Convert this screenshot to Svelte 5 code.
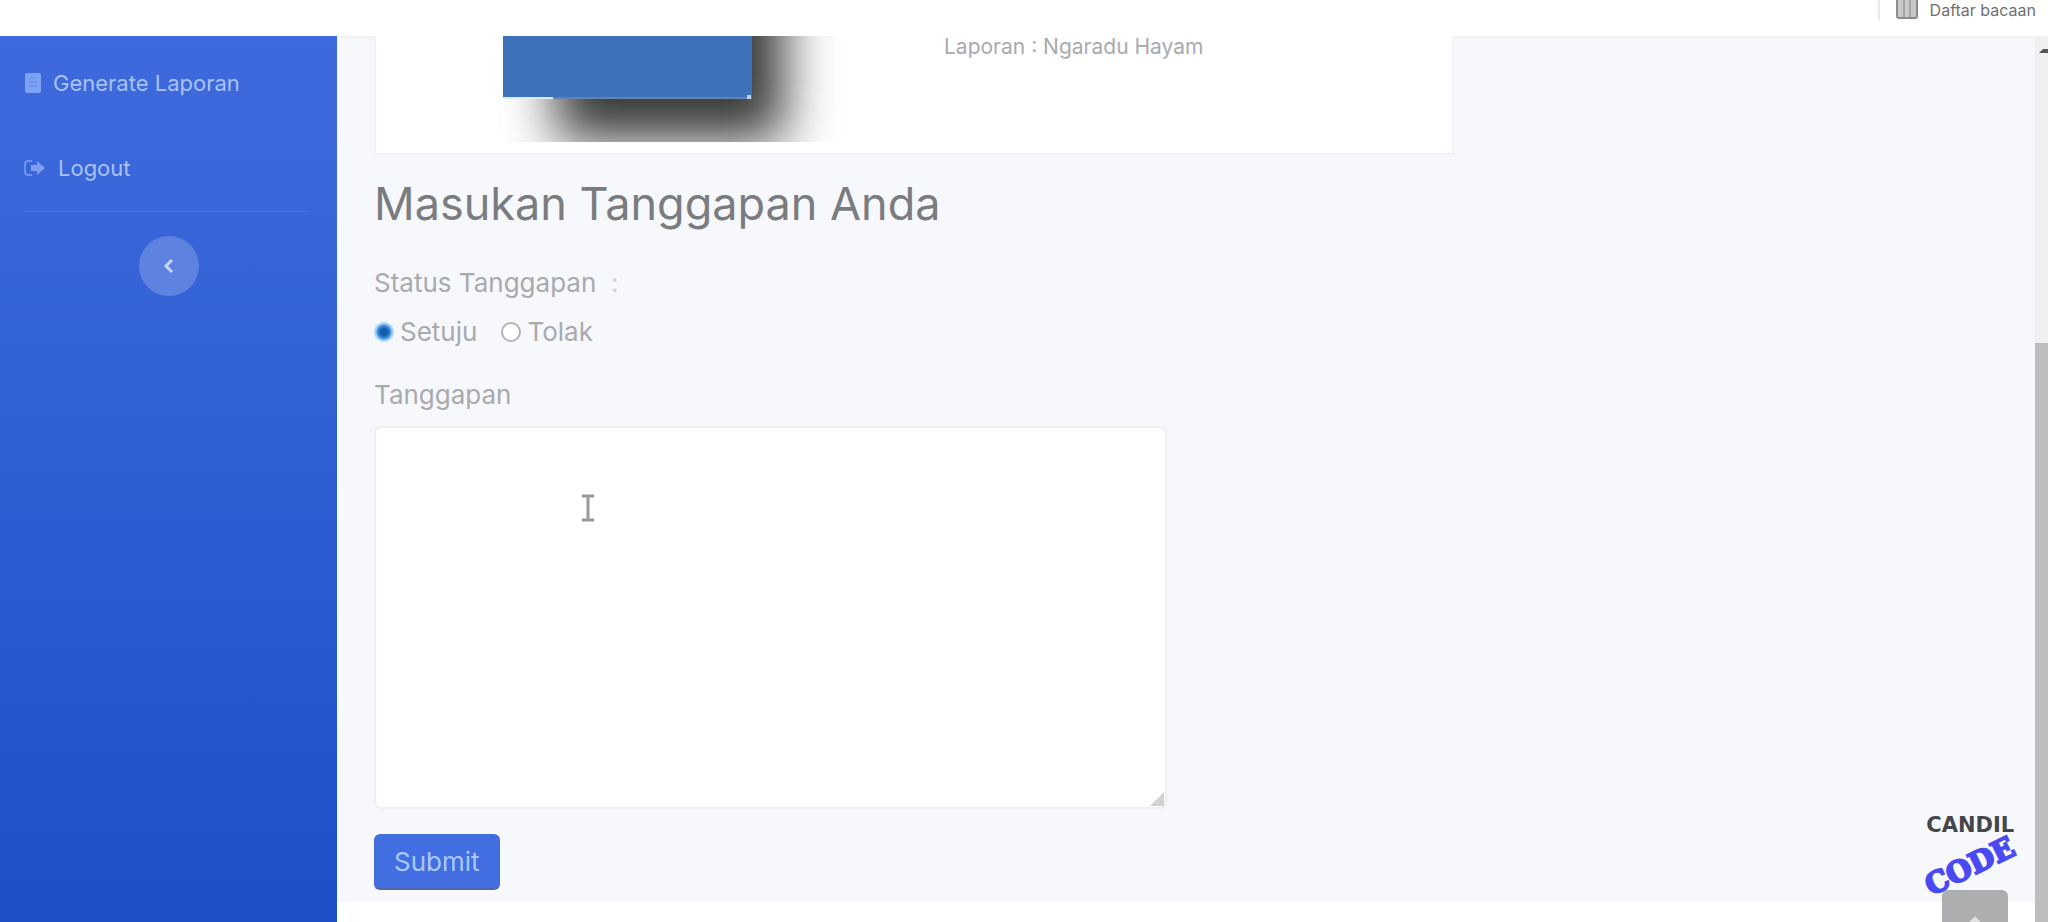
<script>
  let status = "setuju";
  let tanggapan = "";

  const handleSubmit = () => {
    tanggapan = tanggapan.trim();
  };
</script>

<div class="page">
  <header class="bookmarks">
    <a class="reading-list" href="#bacaan">
      <svg width="22" height="20" viewBox="0 0 22 20" aria-hidden="true">
        <rect x="1" y="-2" width="20" height="20" rx="2" fill="#c9c9c9" stroke="#8c8c8c" stroke-width="2" />
        <path d="M8 0v17M14 0v17" stroke="#a4a4a4" stroke-width="2" />
      </svg>
      Daftar bacaan
    </a>
  </header>

  <div class="shell">
    <nav class="sidebar">
      <a class="nav-link" href="#laporan">
        <svg width="18" height="22" viewBox="0 0 18 22" aria-hidden="true">
          <rect x="1" y="1" width="16" height="20" rx="2" fill="#7ea3f5" />
          <path d="M5 6h8M5 10h8M5 14h8" stroke="#5f88ea" stroke-width="1" />
        </svg>
        Generate Laporan
      </a>
      <a class="nav-link logout" href="#logout">
        <svg width="22" height="18" viewBox="0 0 22 18" aria-hidden="true">
          <path d="M8 2H4a3 3 0 0 0-3 3v8a3 3 0 0 0 3 3h4" fill="none" stroke="#6f90ec" stroke-width="2" />
          <path d="M7 6h6V2l8 7-8 7v-4H7z" fill="#7f9df2" />
        </svg>
        Logout
      </a>
      <hr />
      <button class="toggle" type="button" aria-label="Toggle sidebar">
        <svg width="12" height="18" viewBox="0 0 12 18" aria-hidden="true">
          <path d="M9 3L3 9l6 6" fill="none" stroke="#c8d4f9" stroke-width="3" />
        </svg>
      </button>
    </nav>

    <div class="content">
      <main>
        <section class="card">
          <svg class="photo" width="344" height="106" viewBox="0 0 344 106" aria-hidden="true">
            <defs>
              <filter id="soft" x="-50%" y="-100%" width="200%" height="300%" color-interpolation-filters="sRGB">
                <feGaussianBlur stdDeviation="26" />
              </filter>
            </defs>
            <rect x="58" y="-200" width="228" height="304" fill="#363835" filter="url(#soft)" />
            <rect width="5" height="62" fill="#fff" />
            <rect x="5" y="-4" width="249" height="66" fill="#3d72b9" />
            <path d="M5 62h249" stroke="#6682b0" stroke-width="2" />
            <path d="M5 62h50" stroke="#dfe8f5" stroke-width="2" />
            <rect x="249" y="59" width="4" height="4" fill="#b9d3f0" />
          </svg>
          <p>Laporan : Ngaradu Hayam</p>
        </section>

        <h1>Masukan Tanggapan Anda</h1>

        <form on:submit|preventDefault={handleSubmit}>
          <fieldset>
            <legend>Status Tanggapan &nbsp;<span class="colon">:</span></legend>
            <div class="options">
              <label>
                <input type="radio" name="status" value="setuju" bind:group={status} />
                Setuju
              </label>
              <label>
                <input type="radio" name="status" value="tolak" bind:group={status} />
                Tolak
              </label>
            </div>
          </fieldset>

          <label class="field-label" for="tanggapan">Tanggapan</label>
          <div class="field">
            <textarea id="tanggapan" bind:value={tanggapan}></textarea>
            <svg class="grip" width="14" height="14" viewBox="0 0 14 14" aria-hidden="true">
              <path d="M14 0v14H0z" fill="#d2d2d2" />
            </svg>
            <svg class="cursor" width="14" height="28" viewBox="0 0 14 28" aria-hidden="true">
              <path d="M1 2h12M1 26h12M7 2v24" fill="none" stroke="#9a9a9a" stroke-width="3" />
            </svg>
          </div>

          <button class="submit" type="submit">Submit</button>
        </form>
      </main>
      <footer></footer>

      <div class="watermark">
        <span class="candil">CANDIL</span>
        <span class="code">CODE</span>
      </div>
      <a class="to-top" href="#top" aria-label="Scroll to top">
        <svg width="18" height="6" viewBox="0 0 18 6" aria-hidden="true">
          <path d="M2 10l7-7 7 7" fill="none" stroke="#e0e0e0" stroke-width="4" />
        </svg>
      </a>
    </div>

    <div class="scrollbar">
      <svg width="13" height="8" viewBox="0 0 13 8" aria-hidden="true">
        <path d="M4 7l4-4h5v4z" fill="#555" />
      </svg>
      <div class="thumb"></div>
    </div>
  </div>
</div>

<style>
  :global(body) {
    margin: 0;
  }

  .page {
    display: flex;
    flex-direction: column;
    height: 100vh;
    overflow: hidden;
    font-family: Inter, "Open Sans", sans-serif;
    font-size: 26px;
    color: #a9aaae;
  }

  .bookmarks {
    flex: none;
    display: flex;
    justify-content: flex-end;
    box-sizing: border-box;
    height: 36px;
    padding-right: 12px;
    background: #fff;
  }

  .reading-list {
    display: flex;
    align-items: center;
    gap: 12px;
    height: 20px;
    padding-left: 16px;
    border-left: 2px solid #e9e9e9;
    font-size: 16px;
    line-height: 20px;
    color: #707070;
    text-decoration: none;
  }

  .shell {
    flex: 1;
    display: flex;
    min-height: 0;
  }

  .sidebar {
    flex: none;
    display: flex;
    flex-direction: column;
    box-sizing: border-box;
    width: 337px;
    padding: 26px 24px 0;
    background: linear-gradient(#3f6add, #3463d5 34%, #1e4fc9);
  }

  .nav-link {
    display: flex;
    align-items: center;
    gap: 11px;
    height: 42px;
    margin-bottom: 43px;
    font-size: 22px;
    color: #a9c2fa;
    text-decoration: none;
  }

  .nav-link.logout {
    gap: 12px;
    margin-bottom: 22px;
  }

  hr {
    align-self: stretch;
    margin: 0 4px 24px 0;
    border: 0;
    border-top: 1px solid #4c76de;
  }

  .toggle {
    display: flex;
    align-items: center;
    justify-content: center;
    align-self: center;
    width: 60px;
    height: 60px;
    border: 0;
    border-radius: 50%;
    background: #5e82e0;
  }

  .content {
    position: relative;
    flex: 1;
    display: flex;
    flex-direction: column;
    min-width: 0;
    background: #f6f8fb;
    box-shadow: inset 0 2px 2px #f0f1f3;
  }

  main {
    flex: 1;
    padding: 0 37px;
  }

  .card {
    display: flex;
    gap: 102px;
    box-sizing: border-box;
    width: 100%;
    max-width: 1080px;
    height: 119px;
    padding-left: 122px;
    border: 2px solid #f1f2f6;
    border-top: 0;
    background: #fff;
  }

  .photo {
    flex: none;
  }

  .card p {
    margin: 0;
    font-size: 21px;
    line-height: 22px;
  }

  h1 {
    margin: 22px 0 36px;
    font-size: 45px;
    font-weight: 400;
    line-height: 54px;
    color: #7b7c80;
  }

  fieldset {
    margin: 0;
    padding: 0;
    border: 0;
  }

  legend {
    padding: 0;
    line-height: 32px;
  }

  .colon {
    color: #d0d1d5;
  }

  .options {
    display: flex;
    gap: 24px;
    margin-top: 17px;
  }

  .options label {
    display: flex;
    align-items: center;
    gap: 6px;
    line-height: 32px;
  }

  input {
    appearance: none;
    box-sizing: border-box;
    width: 20px;
    height: 20px;
    margin: 0;
    border: 2px solid #b2b3b6;
    border-radius: 50%;
    background: #fff;
  }

  input:checked {
    border-color: #a8d4fa;
    background: radial-gradient(#155cad 30%, #4c98e2 60%, #a8d4fa 75%);
  }

  .field-label {
    display: block;
    margin: 31px 0 15px;
    line-height: 32px;
  }

  .field {
    position: relative;
    width: 100%;
    max-width: 793px;
  }

  textarea {
    display: block;
    box-sizing: border-box;
    width: 100%;
    height: 383px;
    padding: 12px;
    border: 2px solid #eeeff4;
    border-radius: 7px;
    background: #fff;
    font: inherit;
    resize: none;
  }

  .grip {
    position: absolute;
    right: 3px;
    bottom: 3px;
  }

  .cursor {
    position: absolute;
    top: 68px;
    left: 207px;
  }

  .submit {
    display: block;
    box-sizing: border-box;
    height: 56px;
    margin: 25px 0 0;
    padding: 0 20px;
    border: 0;
    border-bottom: 2px solid #5466a5;
    border-radius: 6px;
    background: #426ee2;
    font: inherit;
    color: #a9c8ff;
  }

  footer {
    flex: none;
    height: 20px;
    background: #fff;
  }

  .watermark {
    position: absolute;
    right: 17px;
    bottom: 26px;
    display: flex;
    flex-direction: column;
    align-items: center;
    z-index: 2;
  }

  .candil {
    font-family: "DejaVu Sans", sans-serif;
    font-size: 21px;
    font-weight: 700;
    line-height: 22px;
    color: #444649;
  }

  .code {
    font-family: "DejaVu Serif", serif;
    font-size: 29px;
    font-weight: 700;
    line-height: 60px;
    color: #4b49f2;
    -webkit-text-stroke: 2px #4b49f2;
    transform: rotate(-26deg);
  }

  .to-top {
    position: absolute;
    right: 27px;
    bottom: 0;
    display: flex;
    justify-content: center;
    align-items: flex-end;
    width: 66px;
    height: 32px;
    border-radius: 6px 6px 0 0;
    background: #adaeaf;
  }

  .scrollbar {
    flex: none;
    display: flex;
    flex-direction: column;
    align-items: flex-end;
    box-sizing: border-box;
    width: 13px;
    padding-top: 10px;
    background: #f0f0f1;
  }

  .thumb {
    flex: 1;
    width: 100%;
    margin-top: 289px;
    background: #bebebf;
  }
</style>
